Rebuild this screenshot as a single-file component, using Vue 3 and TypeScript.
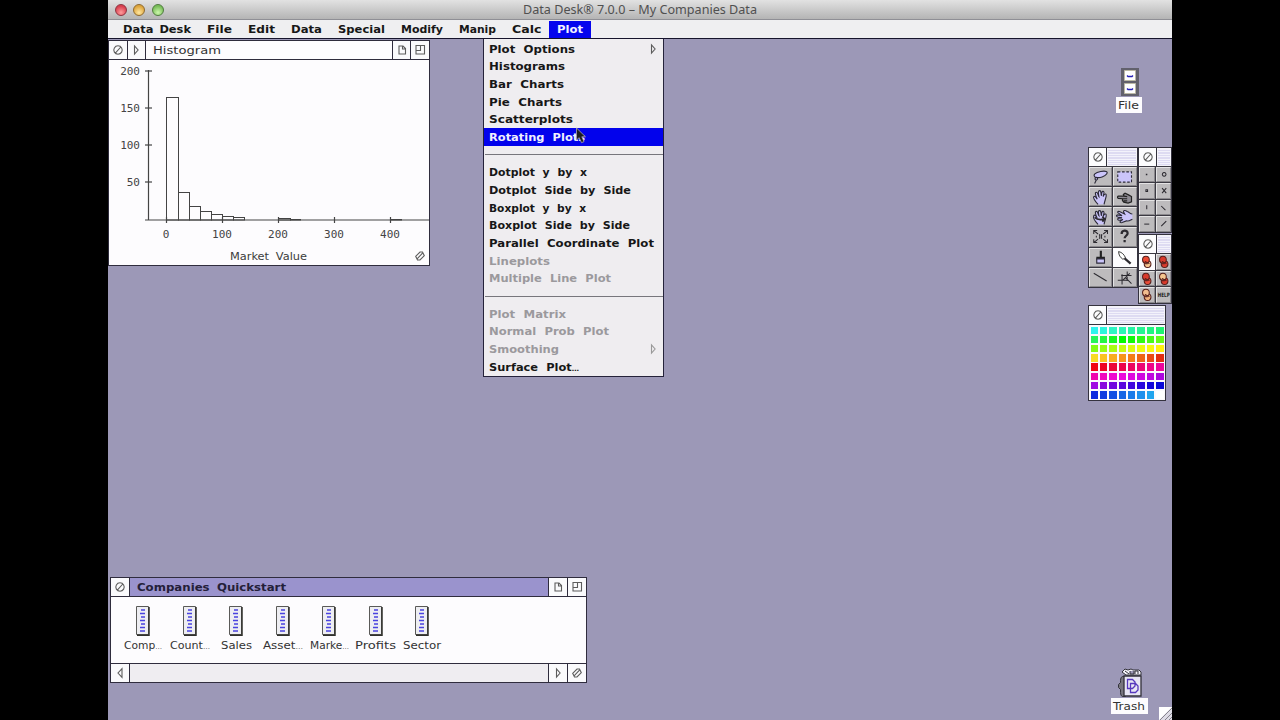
<script setup lang="ts">
import { h } from 'vue'

interface Entry { text: string; w: number; off?: boolean; sub?: boolean; rule?: boolean }

// Fixed-width text run: the glyphs are fitted to the given advance width.
const Label = (p: { text: string; w: number }) => {
  const cut = p.text.endsWith('…')
  return h('svg', { class: 'label', width: p.w, height: 14 }, [
    h('text', { x: 0, y: 11.3, textLength: p.w, lengthAdjust: 'spacingAndGlyphs' },
      cut ? [p.text.slice(0, -1), h('tspan', { 'font-size': 7 }, '…')] : p.text),
  ])
}
Label.props = ['text', 'w']

const glyphs: Record<string, string> = {
  close: 'M9 4.8a4.2 4.2 0 1 0 .01 0M6.3 12.2L11.8 6',
  play: 'M7.5 5v8l3.6-4z',
  back: 'M11 4.6v8.8L7 9z',
  page: 'M6 5h4l2.5 2.5V13H6zM9.5 5v3h3',
  zoom: 'M5 4.500h8.500v8.500H5zM5 9.500h4.500V4.500',
  size: 'M4.700 9.300l4.300-4.300h2.500l1.800 3.700-4.300 4.300h-2.500zM6.300 11.700l5.200-5.500',
}
const Glyph = (p: { name: string }) =>
  h('svg', { class: 'glyph', width: 18, height: 18, viewBox: '0 0 18 18' }, [h('path', { d: glyphs[p.name] })])
Glyph.props = ['name']

const bar = [
  { text: 'Data Desk', w: 68 }, { text: 'File', w: 25 }, { text: 'Edit', w: 27 },
  { text: 'Data', w: 31 }, { text: 'Special', w: 47 }, { text: 'Modify', w: 42 },
  { text: 'Manip', w: 37 }, { text: 'Calc', w: 29.5 }, { text: 'Plot', w: 26 },
]

const menu: Entry[] = [
  { text: 'Plot Options', w: 86, sub: true },
  { text: 'Histograms', w: 76 },
  { text: 'Bar Charts', w: 75 },
  { text: 'Pie Charts', w: 73 },
  { text: 'Scatterplots', w: 84 },
  { text: 'Rotating Plots', w: 96 },
  { text: '', w: 0, rule: true },
  { text: 'Dotplot y by x', w: 98 },
  { text: 'Dotplot Side by Side', w: 142 },
  { text: 'Boxplot y by x', w: 97 },
  { text: 'Boxplot Side by Side', w: 141 },
  { text: 'Parallel Coordinate Plot', w: 165 },
  { text: 'Lineplots', w: 61, off: true },
  { text: 'Multiple Line Plot', w: 122, off: true },
  { text: '', w: 0, rule: true },
  { text: 'Plot Matrix', w: 77, off: true },
  { text: 'Normal Prob Plot', w: 120, off: true },
  { text: 'Smoothing', w: 70, off: true, sub: true },
  { text: 'Surface Plot…', w: 90 },
]

const vars = [
  { text: 'Comp…', w: 38 }, { text: 'Count…', w: 40 }, { text: 'Sales', w: 31 }, { text: 'Asset…', w: 40 },
  { text: 'Marke…', w: 39 }, { text: 'Profits', w: 41 }, { text: 'Sector', w: 38 },
]

const yTicks = [{ v: '200', y: 11.5 }, { v: '150', y: 48.5 }, { v: '100', y: 85.5 }, { v: '50', y: 122.5 }]
const xTicks = [{ v: '0', x: 57 }, { v: '100', x: 113 }, { v: '200', x: 169 }, { v: '300', x: 225 }, { v: '400', x: 281 }]
const bars = [
  [57, 12, 123], [69, 11, 28], [80, 11, 14], [91, 11, 9], [102, 11, 6], [113, 11, 4], [124, 11, 3],
  [169, 12, 2], [181, 10, 1], [281, 11, 1],
]

const swatches: string[] = [
  '#2ef3ee', '#2af5dc', '#2df5c4', '#2cf5b4', '#25f5a4', '#26f593', '#20f581', '#1df571',
  '#27f35b', '#24f544', '#18f524', '#05f905', '#14f80b', '#31f918', '#4bf918', '#66fa17',
  '#83fb15', '#99fb15', '#abfb14', '#c6fb13', '#dcfa13', '#edfb12', '#f8f810', '#fff00f',
  '#f8da25', '#fbc223', '#f9ac20', '#f7931c', '#f47b19', '#ee6317', '#ea4a14', '#e32d10',
  '#f00512', '#ee0424', '#ec0638', '#ec054b', '#ec0561', '#ec0576', '#ee0589', '#ed069c',
  '#ef07ad', '#f007bf', '#ef08d0', '#ec08dc', '#df07df', '#cf07e0', '#bf08e0', '#ad08df',
  '#a009e2', '#8808de', '#7107df', '#5a06df', '#4105df', '#2904de', '#1203da', '#0808d8',
  '#0e28df', '#103be0', '#134fe3', '#1765e5', '#197ae9', '#1d8fec', '#20a4ee', '#ffffff',
]

const dots = ['M7.500 7.500h.6v.6h-.6z', 'M8.500 5.500a2.200 2.200 0 1 0 .01 0', 'M7 7h2v2H7z', 'M6 5l5 6M11 5l-5 6', 'M8 5v5', 'M5 6l5 5', 'M5 8.500h6', 'M5 11l6-6']
const rings = [['#ec4a34', '#f5c58e'], ['#d93a2c', '#d93a2c'], ['#d93a2c', '#e84c38'], ['#f5c58e', '#d93a2c'], ['#f3bd8e', '#f0b07c']]
</script>

<template>
  <div class="stage">
    <div class="screen">
      <header class="titlebar">
        <i class="lamp red"></i><i class="lamp amber"></i><i class="lamp green"></i>
        <Label class="caption" text="Data Desk® 7.0.0 – My Companies Data" :w="234" />
      </header>
      <nav class="menubar">
        <span v-for="(m, i) in bar" :key="i" class="head" :class="{ open: m.text === 'Plot' }">
          <Label :text="m.text" :w="m.w" />
        </span>
      </nav>

      <main class="desk">
        <section class="win hist">
          <div class="winbar">
            <span class="box"><Glyph name="close" /></span>
            <span class="box"><Glyph name="play" /></span>
            <span class="name"><Label text="Histogram" :w="68" /></span>
            <span class="box end"><Glyph name="page" /></span>
            <span class="box end"><Glyph name="zoom" /></span>
          </div>
          <svg class="chart" width="320" height="205" viewBox="0 0 320 205">
            <path class="axis" d="M39.500 10V160M36 160H321" />
            <path v-for="t in yTicks" :key="t.v" class="axis" :d="`M36 ${t.y - .5}h7`" />
            <path v-for="t in xTicks" :key="t.v" class="axis" :d="`M${t.x + .5} 157v6`" />
            <rect v-for="(b, i) in bars" :key="i" class="bin" :x="b[0] + .5" :y="160.5 - b[2]" :width="b[1]" :height="b[2] - .5" />
            <text v-for="t in yTicks" :key="'y' + t.v" class="num" text-anchor="end" :x="31" :y="t.y + 3">{{ t.v }}</text>
            <text v-for="t in xTicks" :key="'x' + t.v" class="num" text-anchor="middle" :x="t.x" :y="177.5">{{ t.v }}</text>
            <text class="var" x="121" y="200" textLength="77" lengthAdjust="spacingAndGlyphs">Market Value</text>
          </svg>
          <Glyph class="corner" name="size" />
        </section>

        <ul class="menu">
          <li v-for="(m, i) in menu" :key="i" :class="{ off: m.off, hot: m.text === 'Rotating Plots' }">
            <hr v-if="m.rule">
            <Label v-else :text="m.text" :w="m.w" />
            <Glyph v-if="m.sub" name="play" />
          </li>
        </ul>
        <svg class="cursor" width="12" height="18" viewBox="0 0 12 18">
          <path d="M1.500 1v12l2.700-2.300 2.300 5 2.500-1.100-2.200-4.800h3.700z" />
        </svg>

        <div class="drawer">
          <svg width="18" height="28" viewBox="0 0 18 28">
            <path fill="#62616c" d="M0 0h18v28H0z" />
            <path fill="#fff" stroke="#bcb9a5" d="M3.500 2.500h11v10h-11zM3.500 15.500h11v10h-11z" />
            <path fill="none" stroke="#2620b5" stroke-width="1.300" d="M6 7.500l1 1h4l1-1M6 20.500l1 1h4l1-1" />
          </svg>
          <span class="tag"><Label text="File" :w="21" /></span>
        </div>

        <section class="palette tools">
          <div class="grip"><span><Glyph name="close" /></span><i></i></div>
          <div class="cells">
            <svg viewBox="0 0 24 20"><path class="lilac" d="M6 11C2 8 6 5 12 4c6-1 9 0 7 3-2 3-8 5-12 4M6 11c3-1 3 3 1 3s-2-3 0-3M7 14l-2 4" /></svg>
            <svg viewBox="0 0 24 20"><path class="lilac" stroke-dasharray="3 2" d="M4 4.500h16v12H4z" /></svg>
            <svg viewBox="0 0 24 20"><path class="lilac" d="M9 19C5 15 3 11 4 10s3 1 4 3C6 8 5 5 7 5s2 4 3 5c-1-5-1-7 1-7s1 4 2 6c0-4 1-6 2.500-5S15 8 15 10c1-3 3-4 3.500-2S17 14 16 19" /></svg>
            <svg viewBox="0 0 24 20"><path fill="#8d8a92" stroke="#222" stroke-width="1.400" d="M4.500 9.500h7l-1-2 2-1.500 4 2 3.500 2v6l-4 1.500-5-1-1.500-2v-2l-5-.5c-1-.5-1-2 0-2.500zM10 12.500h5M11 15h4M11 9.500l4 .5" /></svg>
            <svg viewBox="0 0 24 20"><path class="lilac" d="M9 19C5 15 3 11 4 9s3 1 4 3C6 7 5 4 7 4s2 4 3 5C9 4 9 3 11 3s1 4 2 6c0-4 1-6 2.500-5S15 8 15 10c1-3 3-4 3.500-2S17 14 16 19" /><path class="ink thick" d="M5 11c3 3 7 3 11 2M14 10l3 3-3 3" /></svg>
            <svg viewBox="0 0 24 20"><path class="lilac" d="M21 7c-3 0-3-2-6-3-3-2-5-1-4 1l1 2L6 4C4 3.500 3 5 5 6l4 3-5-1c-2 0-2 2 0 2.500l5 1-4 .5c-2 .5-1 2.500 1 2.200l4-.7-3 2c-1 1 0 2 2 1.500l5-2c3 1 5-1 7-2" /></svg>
            <svg viewBox="0 0 24 20"><path class="ink" stroke-width="1.500" d="M4 7V3h4M16 3h4v4M20 13v4h-4M8 17H4v-4M4 3l5 4M20 3l-5 4M4 17l5-4M20 17l-5-4M10 8h1v4h-1M14 8h-1v4h1M7 9v2M17 9v2" /></svg>
            <svg viewBox="0 0 24 20"><path class="ink heavy" d="M8.500 7c0-5 7-5 7-1 0 3-3.500 3-3.500 6M12 14v2.500" /></svg>
            <svg viewBox="0 0 24 20"><path fill="#222" d="M11 2h2.500v7h3.500v4H7V9h4z" /><path class="lilac" d="M7.500 11.500h9v5h-9z" /></svg>
            <svg class="lit" viewBox="0 0 24 20"><path fill="#fff" stroke="#222" d="M5 3c4 1 6 3 8 7l-3 2C7 10 5 7 5 3z" /><path class="ink heavy" d="M12 11l7 6" /></svg>
            <svg viewBox="0 0 24 20"><path class="ink" d="M4 5l15 9" /></svg>
            <svg viewBox="0 0 24 20"><path class="ink" stroke-width="1.500" d="M9 6v12M15 3v11M8 7.500h12M4 13h12M10 13l8-8M13 10l7 7" /></svg>
          </div>
        </section>

        <section class="palette marks">
          <div class="grip"><span><Glyph name="close" /></span><i></i></div>
          <div class="cells">
            <svg v-for="(d, i) in dots" :key="i" viewBox="0 0 16 16"><path class="ink" :d="d" /></svg>
          </div>
        </section>

        <section class="palette links">
          <div class="grip"><span><Glyph name="close" /></span><i></i></div>
          <div class="cells">
            <svg v-for="(r, i) in rings" :key="i" viewBox="0 0 16 16" :class="{ lit: i === 0 }">
              <g stroke="#57201c" stroke-width="1.200"><circle cx="9" cy="10.800" r="4" :fill="r[1]" /><circle cx="7" cy="5.500" r="4" :fill="r[0]" /><path fill="none" d="M6 7.500c1 2 4 1 5 3M5 10.500h4" /></g>
            </svg>
            <svg viewBox="0 0 16 16"><text class="help" x="1" y="11" textLength="14" lengthAdjust="spacingAndGlyphs">HELP</text></svg>
          </div>
        </section>

        <section class="palette colors">
          <div class="grip"><span><Glyph name="close" /></span><i></i></div>
          <div class="swatches"><i v-for="(c, i) in swatches" :key="i" :style="{ background: c }"></i></div>
        </section>

        <section class="win quick">
          <div class="winbar">
            <span class="box"><Glyph name="close" /></span>
            <span class="name"><Label text="Companies Quickstart" :w="149" /></span>
            <span class="box end"><Glyph name="page" /></span>
            <span class="box end"><Glyph name="zoom" /></span>
          </div>
          <div class="files">
            <figure v-for="v in vars" :key="v.text">
              <svg width="14" height="30" viewBox="0 0 14 30">
                <path fill="#eeeef2" stroke="#5a5a58" d="M.5.500h12v28H.500z" />
                <path fill="none" stroke="#30302c" stroke-width="1.500" d="M13 1v28.200H1" />
                <path fill="none" stroke="#4a43e0" stroke-width="1.500" d="M5 4h4M4 7.500h5M5 11h4M4 14.500h5M5 18h4M4 21.500h5M4 25h5" />
              </svg>
              <Label :text="v.text" :w="v.w" />
            </figure>
          </div>
          <div class="scroll">
            <span class="box"><Glyph name="back" /></span>
            <span class="track"></span>
            <span class="box end"><Glyph name="play" /></span>
            <span class="box end"><Glyph name="size" /></span>
          </div>
        </section>

        <div class="trash">
          <svg width="28" height="30" viewBox="0 0 28 30">
            <path fill="#77757e" stroke="#33323a" d="M5.500 8.500h3v20h-3c-1 0-2-2-2-4v-3l-2-2v-3l2-2v-2c0-2 1-4 2-4z" />
            <path fill="#e8e6f4" stroke="#33323a" stroke-width="1.300" d="M7 8h17v20H7z" />
            <path fill="#f4f3fa" stroke="#33323a" d="M5 4l3-3 3 1 3-1 2 1h6l2 2v3H9zM8 3l4 3M13 3v3h4V3M18 6V3h3v3" />
            <path fill="none" stroke="#5638bd" stroke-width="1.300" d="M10.500 11.500h5l2.500 2.500v4l-2.500 2.500h-5zM13.500 15.500h5l2.500 2.500v4l-2.500 2.500h-5z" />
          </svg>
          <span class="tag"><Label text="Trash" :w="32" /></span>
        </div>
        <svg class="grow" width="13" height="13" viewBox="0 0 13 13"><path fill="#fff" d="M0 0h13v13H0z" /><path fill="#dedce6" d="M0 13L13 0v13z" /><path stroke="#86848e" d="M1 13L13 1M6 13l7-7M10 13l3-3" /></svg>
      </main>
    </div>
  </div>
</template>

<style>
html, body { margin: 0; background: #000; overflow: hidden; }
</style>

<style scoped>
.stage { width: 1280px; height: 720px; background: #000; display: flex; justify-content: center; overflow: hidden; }
.screen { width: 1064px; height: 720px; display: flex; flex-direction: column; background: #9c98b7; overflow: hidden; font: 11px "DejaVu Sans", sans-serif; color: #171717; }
.label { display: block; flex: none; overflow: visible; fill: currentColor; }
.glyph { display: block; flex: none; fill: none; stroke: #5c5c5c; stroke-width: 1.100; }

.titlebar { height: 20px; flex: none; display: flex; align-items: center; background: linear-gradient(#e2e2e2, #b4b4b4); border-bottom: 1px solid #8f8f95; box-sizing: border-box; padding-left: 6.500px; gap: 6.700px; }
.lamp { width: 12px; height: 12px; border-radius: 50%; box-sizing: border-box; border: 1px solid #555; position: relative; top: .5px; }
.red { background: radial-gradient(circle at 50% 75%, #ff9b9b, #d83f4e 70%); border-color: #8d3440; }
.amber { background: radial-gradient(circle at 50% 75%, #ffe7a0, #dda53c 70%); border-color: #8f6a2e; }
.green { background: radial-gradient(circle at 50% 75%, #ccf7ac, #79bd59 70%); border-color: #4f7c3f; }
.caption { margin-left: 352.400px; font: 12.500px "Noto Sans", sans-serif; color: #505050; position: relative; top: .5px; }

.menubar { height: 18.500px; flex: none; box-sizing: border-box; background: #efeff1; border-bottom: 1.500px solid #16142c; display: flex; align-items: center; padding: 1px 0 0 6.500px; font-weight: bold; }
.head { height: 17px; display: flex; align-items: center; padding: 0 8px; word-spacing: 2px; }
.open { background: #0505ee; color: #f2f2ff; }

.desk { flex: 1; position: relative; }
.win { position: absolute; box-sizing: border-box; border: 1.500px solid #2f2c3d; background: #fdfcfe; display: flex; flex-direction: column; }
.winbar, .scroll { display: flex; flex: none; box-sizing: border-box; height: 19px; }
.winbar { border-bottom: 1px solid #2f2c3d; }
.box { width: 18.600px; box-sizing: border-box; border-right: 1px solid #2f2c3d; display: flex; justify-content: center; align-items: center; background: #fafafc; }
.box.end { border-right: 0; border-left: 1px solid #2f2c3d; }
.name { flex: 1; display: flex; align-items: center; padding-left: 7px; word-spacing: 3px; }

.hist { left: 0; top: 1.500px; width: 322px; height: 225.500px; }
.hist .name { color: #333; }
.chart { display: block; flex: none; }
.axis { stroke: #444; stroke-width: 1.200; fill: none; }
.bin { fill: none; stroke: #444; }
.num { font: 11px "DejaVu Sans Mono", monospace; fill: #444; }
.var { fill: #3c3c3c; word-spacing: 3px; }
.corner { position: absolute; right: 0; bottom: 0; }

.menu { position: absolute; left: 375px; top: 0; width: 180.500px; height: 338.500px; box-sizing: border-box; margin: 0; padding: 1.500px 0 0; list-style: none; border: 1.500px solid #25223a; border-top: 0; background: #efedf0; font-weight: bold; word-spacing: 4px; }
.menu li { height: 17.670px; display: flex; align-items: center; justify-content: space-between; padding: 0 1px 0 4.500px; }
.menu .hot { background: #0202ec; color: #f0f0ff; }
.menu .off { color: #9b999d; }
.menu .off .glyph { stroke: #999; }
.menu hr { flex: 1; margin: 0 -1px 0 -4px; border: 0; border-top: 1px solid #77767c; }
.cursor { position: absolute; left: 467px; top: 88.500px; }
.cursor path { fill: #1c1c20; stroke: #aaaab8; stroke-width: .8; }

.drawer, .trash { position: absolute; display: flex; flex-direction: column; align-items: center; }
.drawer { left: 1008px; top: 29.500px; width: 28px; }
.tag { background: #fdfcfe; height: 15.500px; display: flex; align-items: center; padding: 0 2.500px; color: #333; }
.drawer .tag { margin: 1px 3px 0 0; }
.trash { left: 1001px; top: 629.500px; width: 40px; }
.trash svg:first-child:not(.label) { margin-left: 3px; }
.grow { position: absolute; right: 0; bottom: 0; }

.palette { position: absolute; box-sizing: border-box; border: 1px solid #34323e; background: #3c3a43; display: flex; flex-direction: column; }
.grip { height: 18px; flex: none; display: flex; background: #f4f3f9; margin-bottom: 1px; }
.grip span { width: 18px; box-sizing: border-box; flex: none; border-right: 1px solid #34323e; background: #fcfcfe; }
.grip i { flex: 1; background: repeating-linear-gradient(#f3f2fb 0 1px, #dedbf2 1px 2.400px); margin: 1px; }
.cells { flex: 1; min-height: 0; display: grid; grid-template-columns: repeat(2, minmax(0, 1fr)); grid-auto-rows: minmax(0, 1fr); gap: 1px; }
.cells svg { display: block; width: 100%; height: 100%; min-height: 0; box-sizing: border-box; background: #bdbbbd; border: 1px solid; border-color: #e4e3e4 #8a888c #8a888c #e4e3e4; }
.cells .lit { background: #fdfcfe; border-color: #fdfcfe; }
.tools { left: 980px; top: 108.500px; width: 49.500px; height: 141px; }
.marks { left: 1030px; top: 108.500px; width: 34px; height: 85.500px; }
.links { left: 1030px; top: 195.500px; width: 34px; height: 69.500px; }
.colors { left: 980px; top: 266.500px; width: 78px; height: 96px; background: #fbf9fd; }
.colors .grip { border-bottom: 1px solid #34323e; margin: 0; }
.swatches { flex: 1; display: grid; grid-template: repeat(8, 1fr) / repeat(8, 1fr); gap: 1.800px; padding: 1.500px; }
.lilac { fill: #cbc5fa; stroke: #2c2a38; stroke-width: 1.300; }
.ink { fill: none; stroke: #2c2a30; stroke-width: 1.200; }
.thick { stroke-width: 2; }
.heavy { stroke-width: 2.600; }
.help { font: bold 7px "DejaVu Sans", sans-serif; fill: #222; }

.quick { left: 2px; top: 538px; width: 476.500px; height: 106px; }
.quick .winbar { background: #9a93cd; height: 19.500px; }
.quick .name { font-weight: bold; color: #242039; }
.files { flex: 1; display: flex; padding: 8.500px 0 0 9px; color: #333; }
.files figure { margin: 0; width: 46.500px; display: flex; flex-direction: column; align-items: center; gap: 2px; }
.scroll { border-top: 1.500px solid #2f2c3d; }
.track { flex: 1; background: #efedf1; }
</style>
